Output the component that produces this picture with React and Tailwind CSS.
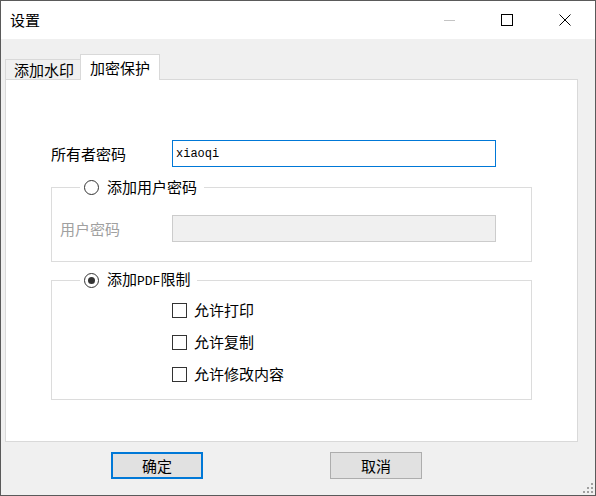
import React from "react";

function Radio({ checked }) {
  return (
    <span className="w-[15px] h-[15px] rounded-full border border-[#333333] bg-white flex items-center justify-center shrink-0">
      {checked && <span className="w-[7px] h-[7px] rounded-full bg-[#333333]" />}
    </span>
  );
}

function Check({ label }) {
  return (
    <div className="h-[32px] flex items-center gap-[7px]">
      <span className="w-[15px] h-[15px] border border-[#333333] bg-white shrink-0" />
      <span className="text-[15px] leading-[20px] text-black">{label}</span>
    </div>
  );
}

export default function App() {
  return (
    <div className="relative w-[596px] h-[496px] border border-[#5a5a5a] bg-[#f0f0f0] flex flex-col font-['Noto_Sans_CJK_SC','Noto_Sans',sans-serif] text-black select-none">
      {/* title bar */}
      <div className="h-[38px] bg-white flex items-center shrink-0">
        <span className="pl-[9px] text-[15px] leading-[20px]">设置</span>
        <div className="ml-auto flex h-full pr-[1px]">
          <div className="w-[58px] h-full flex items-center justify-center">
            <span className="w-[11px] h-px bg-[#c4c4c4]" />
          </div>
          <div className="w-[58px] h-full flex items-center justify-center">
            <span className="w-[12px] h-[12px] border border-black" />
          </div>
          <div className="w-[58px] h-full flex items-center justify-center">
            <svg width="12" height="12" viewBox="0 0 12 12">
              <path d="M0.5 0.5 L11.5 11.5 M11.5 0.5 L0.5 11.5" stroke="#000" strokeWidth="1" fill="none" />
            </svg>
          </div>
        </div>
      </div>

      {/* tabs */}
      <div className="h-[40px] flex items-end pl-[4px] pt-[15px] shrink-0">
        <div className="w-[75px] h-[20px] border-t border-l border-[#d9d9d9] flex items-center pl-[8px] text-[15px] leading-[20px]">
          添加水印
        </div>
        <div className="relative z-10 w-[80px] h-[26px] -mb-px bg-white border-t border-l border-r border-[#d9d9d9] flex items-center justify-center text-[15px] leading-[20px]">
          加密保护
        </div>
      </div>

      {/* panel */}
      <div className="ml-[4px] w-[573px] h-[363px] bg-white border border-[#d9d9d9] shrink-0 pl-[45px] pt-[60px]">
        <div className="flex items-center h-[27px]">
          <span className="w-[121px] text-[15px] leading-[20px]">所有者密码</span>
          <div className="w-[324px] h-[27px] border border-[#0078d7] flex items-center pl-[3px] font-['Liberation_Mono',monospace] text-[12px]">
            xiaoqi
          </div>
        </div>

        <fieldset className="mt-[10px] w-[481px] border border-[#dcdcdc] pt-[18px] pb-[19px]">
          <legend className="ml-[28px] pl-[4px] pr-[7px]">
            <span className="flex items-center gap-[8px] h-[20px]">
              <Radio />
              <span className="text-[15px] leading-[20px]">添加用户密码</span>
            </span>
          </legend>
          <div className="flex items-center h-[27px] pl-[8px]">
            <span className="w-[112px] text-[15px] leading-[20px] text-[#a0a0a0]">用户密码</span>
            <div className="w-[324px] h-[27px] border border-[#cccccc] bg-[#f0f0f0]" />
          </div>
        </fieldset>

        <fieldset className="mt-[8px] w-[481px] border border-[#dcdcdc] pt-[4px] pb-[9px]">
          <legend className="ml-[28px] pl-[4px] pr-[7px]">
            <span className="flex items-center gap-[8px] h-[20px]">
              <Radio checked />
              <span className="text-[15px] leading-[20px]">
                添加<span className="font-['Liberation_Mono',monospace] text-[13px]">PDF</span>限制
              </span>
            </span>
          </legend>
          <div className="pl-[120px]">
            <Check label="允许打印" />
            <Check label="允许复制" />
            <Check label="允许修改内容" />
          </div>
        </fieldset>
      </div>

      {/* buttons */}
      <div className="flex pt-[10px] pl-[110px]">
        <button className="w-[92px] h-[27px] border-2 border-[#0078d7] bg-[#e1e1e1] text-[15px] leading-[20px] flex items-center justify-center">
          确定
        </button>
        <button className="ml-[127px] w-[92px] h-[27px] border border-[#adadad] bg-[#e1e1e1] text-[15px] leading-[20px] flex items-center justify-center">
          取消
        </button>
      </div>

      <svg className="absolute right-[2px] bottom-[2px]" width="10" height="10" viewBox="0 0 10 10">
        <g fill="#a0a0a0">
          <rect x="8" y="0" width="2" height="2" />
          <rect x="4" y="4" width="2" height="2" />
          <rect x="8" y="4" width="2" height="2" />
          <rect x="0" y="8" width="2" height="2" />
          <rect x="4" y="8" width="2" height="2" />
          <rect x="8" y="8" width="2" height="2" />
        </g>
      </svg>
    </div>
  );
}
